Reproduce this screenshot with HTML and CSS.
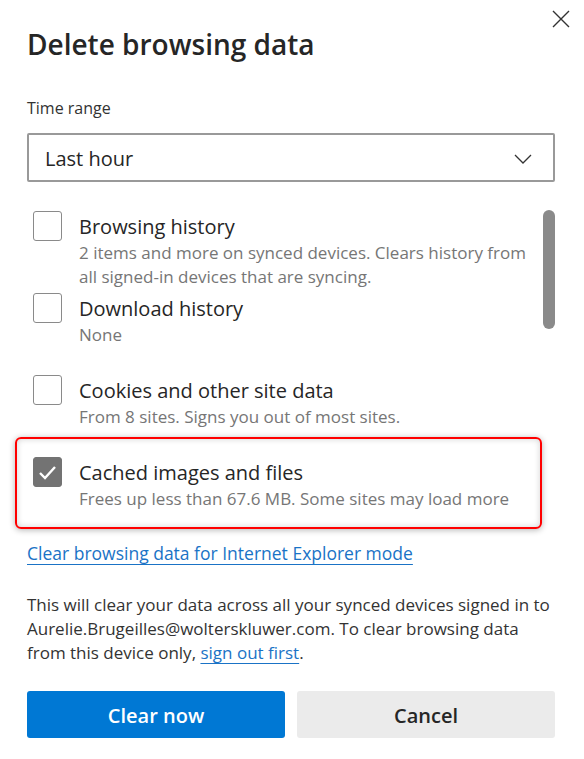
FILE: index.html
```html
<!DOCTYPE html>
<html lang="en">
<head>
    <meta charset="UTF-8">
    <meta name="viewport" content="width=device-width, initial-scale=1.0">
    <title>Delete browsing data</title>
    <link rel="stylesheet" href="styles.css">
</head>
<body>
    <div class="dialog">
        <div class="dialog-header">
            <h1>Delete browsing data</h1>
            <button class="close-button" aria-label="Close">
                <svg width="18" height="18" viewBox="0 0 18 18">
                    <path d="M1 1 L17 17 M17 1 L1 17" stroke="#333" stroke-width="1.4" fill="none"/>
                </svg>
            </button>
        </div>

        <label class="field-label" for="time-range">Time range</label>
        <div class="select-box" id="time-range">
            <span>Last hour</span>
            <svg width="18" height="10" viewBox="0 0 18 10">
                <path d="M1 1 L9 9 L17 1" stroke="#333" stroke-width="1.3" fill="none"/>
            </svg>
        </div>

        <div class="data-scroll">
            <div class="data-list">
                <div class="data-item">
                    <span class="checkbox"></span>
                    <div class="data-text">
                        <div class="data-title">Browsing history</div>
                        <div class="data-desc">2 items and more on synced devices. Clears history from all signed-in devices that are syncing.</div>
                    </div>
                </div>
                <div class="data-item">
                    <span class="checkbox"></span>
                    <div class="data-text">
                        <div class="data-title">Download history</div>
                        <div class="data-desc">None</div>
                    </div>
                </div>
                <div class="data-item">
                    <span class="checkbox"></span>
                    <div class="data-text">
                        <div class="data-title">Cookies and other site data</div>
                        <div class="data-desc">From 8 sites. Signs you out of most sites.</div>
                    </div>
                </div>
                <div class="data-item">
                    <span class="checkbox checked">
                        <svg width="19" height="15" viewBox="0 0 19 15">
                            <path d="M2 8 L7 13 L17 2" stroke="#fff" stroke-width="2.4" fill="none"/>
                        </svg>
                    </span>
                    <div class="data-text">
                        <div class="data-title">Cached images and files</div>
                        <div class="data-desc">Frees up less than 67.6 MB. Some sites may load more</div>
                    </div>
                </div>
                <div class="data-item">
                    <span class="checkbox"></span>
                    <div class="data-text">
                        <div class="data-title">Passwords</div>
                        <div class="data-desc">None</div>
                    </div>
                </div>
                <div class="data-item">
                    <span class="checkbox"></span>
                    <div class="data-text">
                        <div class="data-title">Autofill form data (includes forms and cards)</div>
                        <div class="data-desc">None</div>
                    </div>
                </div>
            </div>
            <!-- overlay scrollbar thumb -->
            <div class="scroll-thumb"></div>
        </div>

        <a class="ie-link" href="#">Clear browsing data for Internet Explorer mode</a>

        <p class="sync-notice">
            This will clear your data across all your synced devices signed in to
            Aurelie.Brugeilles@wolterskluwer.com. To clear browsing data
            from this device only, <a href="#">sign out first</a>.
        </p>

        <div class="actions">
            <button class="btn btn-primary">Clear now</button>
            <button class="btn btn-secondary">Cancel</button>
        </div>

        <!-- red annotation drawn over the cached images row -->
        <div class="annotation"></div>
    </div>
</body>
</html>
```

FILE: styles.css
```css
body {
    margin: 0;
    background-color: #fff;
    font-family: 'Segoe UI', 'Open Sans', sans-serif;
    color: #262626;
}

.dialog {
    position: relative;
    width: 528px;
    padding: 0 29px 0 27px;
}

.dialog-header {
    display: flex;
    justify-content: space-between;
    align-items: flex-start;
}

.dialog-header h1 {
    margin: 26px 0 0;
    font-size: 28px;
    line-height: 36px;
    font-weight: 600;
    color: #262626;
}

.close-button {
    margin: 10px -15px 0 0;
    padding: 0;
    border: none;
    background: none;
    width: 18px;
    height: 18px;
    cursor: pointer;
}

.close-button svg {
    display: block;
}

.field-label {
    display: block;
    margin-top: 35px;
    font-size: 16px;
    line-height: 22px;
    color: #333;
}

.select-box {
    margin-top: 14px;
    height: 43px;
    border: 2px solid #999;
    border-radius: 2px;
    display: flex;
    align-items: center;
    justify-content: space-between;
    padding: 2px 21px 0 16px;
    font-size: 20px;
    color: #262626;
}

.data-scroll {
    position: relative;
    margin-top: 18px;
}

.data-list {
    height: 332px;
    padding-top: 11px;
    box-sizing: border-box;
    overflow: hidden;
}

.scroll-thumb {
    position: absolute;
    top: 10px;
    right: 0;
    width: 12px;
    height: 119px;
    background-color: #8a8a8a;
    border-radius: 6px;
}

.data-item {
    display: flex;
    align-items: flex-start;
    gap: 17px;
    min-height: 82px;
    padding-left: 6px;
    padding-right: 14px;
}

.checkbox {
    flex: none;
    width: 27px;
    height: 28px;
    border: 1px solid #8a8a8a;
    border-radius: 3px;
    background: #fff;
    display: flex;
    align-items: center;
    justify-content: center;
}

.checkbox.checked {
    background-color: #737373;
    border-color: #737373;
}

.data-text {
    padding-top: 2px;
}

.data-title {
    font-size: 20px;
    line-height: 28px;
    color: #262626;
}

.data-desc {
    font-size: 17px;
    line-height: 24px;
    color: #767676;
}

.ie-link {
    display: inline-block;
    margin-top: 9px;
    font-size: 17.5px;
    line-height: 24px;
    color: #1a73c6;
    text-decoration: underline;
    text-underline-offset: 4px;
}

.sync-notice {
    margin: 28px 0 0;
    font-size: 17px;
    line-height: 24px;
    color: #333;
}

.sync-notice a {
    color: #1a73c6;
    text-underline-offset: 4px;
}

.actions {
    display: flex;
    gap: 12px;
    margin-top: 26px;
}

.btn {
    flex: 1;
    height: 47px;
    padding-top: 3px;
    border: none;
    border-radius: 3px;
    font-family: inherit;
    font-size: 20px;
    font-weight: 600;
    cursor: pointer;
}

.btn-primary {
    background-color: #0078d4;
    color: #fff;
}

.btn-secondary {
    background-color: #ebebeb;
    color: #262626;
}

.annotation {
    position: absolute;
    left: 15px;
    top: 437px;
    width: 523px;
    height: 88px;
    border: 2px solid #f00;
    border-radius: 6px;
    box-shadow: 0 1px 6px rgba(0, 0, 0, 0.3), inset 0 0 6px rgba(0, 0, 0, 0.18);
    pointer-events: none;
}
```
